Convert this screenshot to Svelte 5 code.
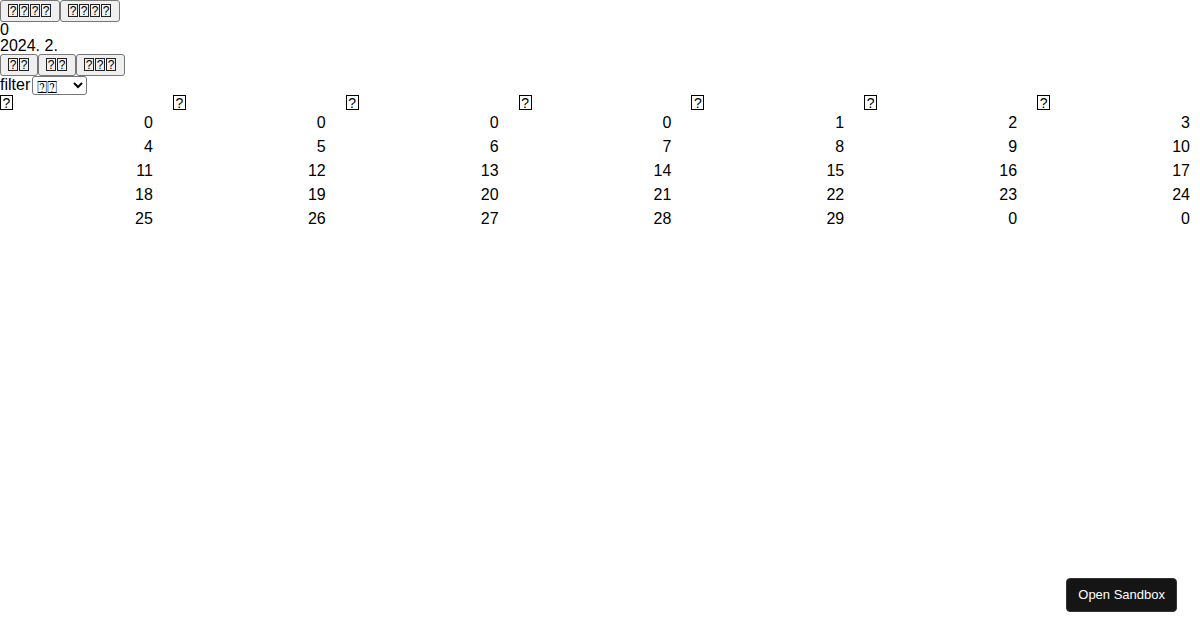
<script>
  const modes = [4, 4];
  const moves = [2, 2, 3];
  const weekdays = 7;

  let count = $state(0);
  let year = $state(2024);
  let month = $state(2);
  let filter = $state('all');

  let weeks = $derived.by(() => {
    const first = new Date(year, month - 1, 1).getDay();
    const last = new Date(year, month, 0).getDate();
    const rows = Math.ceil((first + last) / weekdays);

    return Array.from({ length: rows }, (_, row) =>
      Array.from({ length: weekdays }, (_, col) => {
        const day = row * weekdays + col - first + 1;
        return day > 0 && day <= last ? day : 0;
      })
    );
  });

  // 0: previous month, 1: next month, 2: today
  function move(step) {
    const date = step === 2 ? new Date() : new Date(year, month - 1 + (step ? 1 : -1), 1);
    year = date.getFullYear();
    month = date.getMonth() + 1;
  }
</script>

{#snippet boxes(length)}
  {#each { length } as _}<span class="box">?</span>{/each}
{/snippet}

<main>
  <div class="buttons">
    {#each modes as length}
      <button type="button" onclick={() => count++}>{@render boxes(length)}</button>
    {/each}
  </div>
  <div>{count}</div>
  <div>{year}. {month}.</div>
  <div class="buttons">
    {#each moves as length, step}
      <button type="button" onclick={() => move(step)}>{@render boxes(length)}</button>
    {/each}
  </div>
  <div class="filter">
    <label for="filter">filter</label>
    <select id="filter" bind:value={filter}>
      <option value="all">⍰⍰</option>
      <option value="some">⍰⍰⍰</option>
    </select>
  </div>

  <table>
    <thead>
      <tr>
        {#each { length: weekdays } as _}
          <th scope="col"><span class="box large">?</span></th>
        {/each}
      </tr>
    </thead>
    <tbody>
      {#each weeks as week}
        <tr>
          {#each week as day}
            <td>{day}</td>
          {/each}
        </tr>
      {/each}
    </tbody>
  </table>
</main>

<a class="sandbox" href="#sandbox">Open Sandbox</a>

<style>
  :global(body) {
    margin: 0;
    background: #fff;
    overflow-x: hidden;
  }

  main {
    font: 16px/16px "Liberation Sans", Arial, sans-serif;
    color: #000;
  }

  .buttons {
    display: flex;
  }

  button {
    display: flex;
    align-items: center;
    height: 22px;
    margin: 0;
    padding: 0 7px 1px;
    border: 1px solid #767676;
    border-radius: 3px;
    background: #efefef;
    color: #000;
  }

  .box {
    box-sizing: border-box;
    display: block;
    width: 10px;
    height: 13px;
    margin-right: 1px;
    border: 1px solid #222;
    font: 12px/12px "Liberation Sans", Arial, sans-serif;
    text-align: center;
  }

  .large {
    width: 13px;
    height: 15px;
    border-color: #000;
    font-size: 14px;
    line-height: 14px;
  }

  .filter {
    display: flex;
    gap: 2px;
    line-height: 18px;
  }

  select {
    width: 55px;
    height: 19px;
    margin: 0;
    padding: 0;
    border: 1px solid #767676;
    border-radius: 3px;
    background-color: #fff;
    color: #000;
    font: 17px "Liberation Sans", Arial, sans-serif;
  }

  table {
    width: calc(100% + 10px);
    table-layout: fixed;
    border-collapse: collapse;
  }

  th {
    height: 16px;
    padding: 0;
    vertical-align: top;
  }

  td {
    padding: 4px 20px 4px 0;
    text-align: right;
  }

  .sandbox {
    position: fixed;
    right: 23px;
    bottom: 18px;
    padding: 9px 11px;
    border: 1px solid #343434;
    border-radius: 4px;
    background: #151515;
    color: #fff;
    font: 13px/14px "Liberation Sans", Arial, sans-serif;
    text-decoration: none;
  }
</style>
